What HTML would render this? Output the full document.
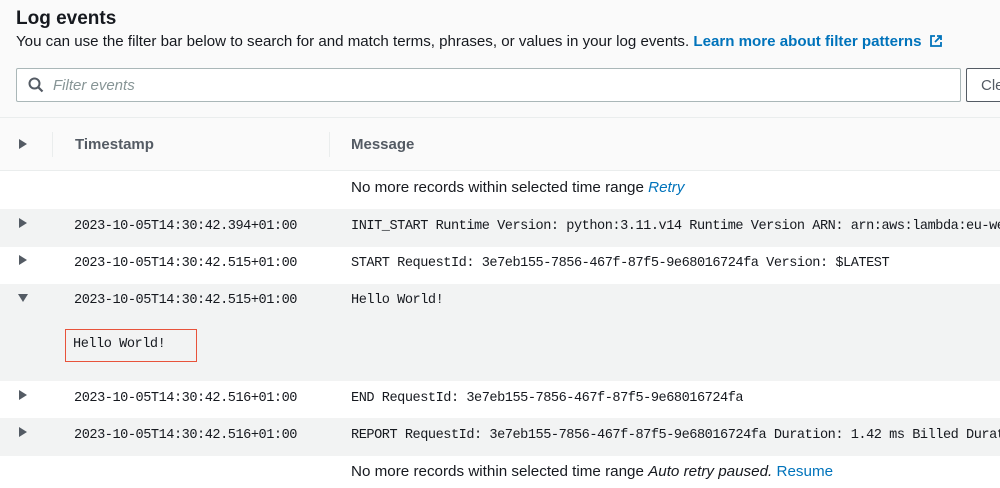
<!DOCTYPE html>
<html><head><style>
*{margin:0;padding:0;box-sizing:border-box}
body{width:1000px;height:488px;overflow:hidden;background:#fafafa;font-family:"Liberation Sans",sans-serif;color:#16191f;position:relative}
.a{position:absolute;white-space:nowrap}
.mono{font-family:"Liberation Mono",monospace;font-size:13.6px;letter-spacing:-0.47px;color:#16191f}
.row{position:absolute;left:0;width:1000px}
.tri{position:absolute;left:19px;width:0;height:0;border-top:5px solid transparent;border-bottom:5px solid transparent;border-left:8px solid #545b64}
.tri.d{border-left:5px solid transparent;border-right:5px solid transparent;border-top:8px solid #545b64;border-bottom:0;left:18px}
a{color:#0073bb;text-decoration:none}
</style></head><body>
<div class="a" style="left:16px;top:8px;font-size:19px;font-weight:bold">Log events</div>
<div class="a" style="left:16px;top:33px;font-size:15.1px">You can use the filter bar below to search for and match terms, phrases, or values in your log events. <a style="font-weight:bold">Learn more about filter patterns</a>
<svg width="14" height="14" viewBox="0 0 14 14" style="vertical-align:-2px;margin-left:3px"><path d="M6 2H2v10h10V8M8 2h4v4M12 2L6 8" fill="none" stroke="#0073bb" stroke-width="1.8"/></svg></div>
<div class="a" style="left:16px;top:68px;width:945px;height:34px;background:#fff;border:1px solid #aab7b8;border-radius:2px"></div>
<svg class="a" style="left:27px;top:76px" width="18" height="18" viewBox="0 0 18 18"><circle cx="7.5" cy="7.5" r="5" fill="none" stroke="#545b64" stroke-width="2"/><path d="M11 11l4.5 4.5" stroke="#545b64" stroke-width="2.2"/></svg>
<div class="a" style="left:53px;top:77px;font-size:15px;font-style:italic;color:#879596">Filter events</div>
<div class="a" style="left:966px;top:68px;width:60px;height:34px;background:#fff;border:1px solid #545b64;border-radius:2px"></div>
<div class="a" style="left:981px;top:77px;font-size:15px;color:#545b64">Clear</div>
<div class="row" style="top:117px;height:1px;background:#eaeded"></div>
<div class="tri" style="top:139px"></div>
<div class="a" style="left:52px;top:132px;width:1px;height:25px;background:#eaeded"></div>
<div class="a" style="left:329px;top:132px;width:1px;height:25px;background:#eaeded"></div>
<div class="a" style="left:75px;top:136px;font-size:15px;font-weight:bold;color:#545b64">Timestamp</div>
<div class="a" style="left:351px;top:136px;font-size:15px;font-weight:bold;color:#545b64">Message</div>
<div class="row" style="top:170px;height:1px;background:#eaeded"></div>

<div class="row" style="top:171px;height:38px;background:#fff"></div>
<div class="a" style="left:351px;top:179px;font-size:15.2px">No more records within selected time range <a style="font-style:italic">Retry</a></div>

<div class="row" style="top:209px;height:38px;background:#f2f3f3"></div>
<div class="tri" style="top:218px"></div>
<div class="a mono" style="left:74px;top:219px">2023-10-05T14:30:42.394+01:00</div>
<div class="a mono" style="left:351px;top:219px">INIT_START Runtime Version: python:3.11.v14 Runtime Version ARN: arn:aws:lambda:eu-west-1</div>

<div class="row" style="top:247px;height:37px;background:#fff"></div>
<div class="tri" style="top:255px"></div>
<div class="a mono" style="left:74px;top:256px">2023-10-05T14:30:42.515+01:00</div>
<div class="a mono" style="left:351px;top:256px">START RequestId: 3e7eb155-7856-467f-87f5-9e68016724fa Version: $LATEST</div>

<div class="row" style="top:284px;height:97px;background:#f2f3f3"></div>
<div class="tri d" style="top:294px"></div>
<div class="a mono" style="left:74px;top:293px">2023-10-05T14:30:42.515+01:00</div>
<div class="a mono" style="left:351px;top:293px">Hello World!</div>
<div class="a" style="left:65px;top:329px;width:132px;height:33px;border:1.5px solid #e8523a"></div>
<div class="a mono" style="left:73px;top:337px">Hello World!</div>

<div class="row" style="top:381px;height:37px;background:#fff"></div>
<div class="tri" style="top:390px"></div>
<div class="a mono" style="left:74px;top:391px">2023-10-05T14:30:42.516+01:00</div>
<div class="a mono" style="left:351px;top:391px">END RequestId: 3e7eb155-7856-467f-87f5-9e68016724fa</div>

<div class="row" style="top:418px;height:38px;background:#f2f3f3"></div>
<div class="tri" style="top:427px"></div>
<div class="a mono" style="left:74px;top:428px">2023-10-05T14:30:42.516+01:00</div>
<div class="a mono" style="left:351px;top:428px">REPORT RequestId: 3e7eb155-7856-467f-87f5-9e68016724fa Duration: 1.42 ms Billed Duration</div>

<div class="row" style="top:456px;height:32px;background:#fff"></div>
<div class="a" style="left:351px;top:463px;font-size:15.2px">No more records within selected time range <i>Auto retry paused.</i> <a>Resume</a></div>
</body></html>
